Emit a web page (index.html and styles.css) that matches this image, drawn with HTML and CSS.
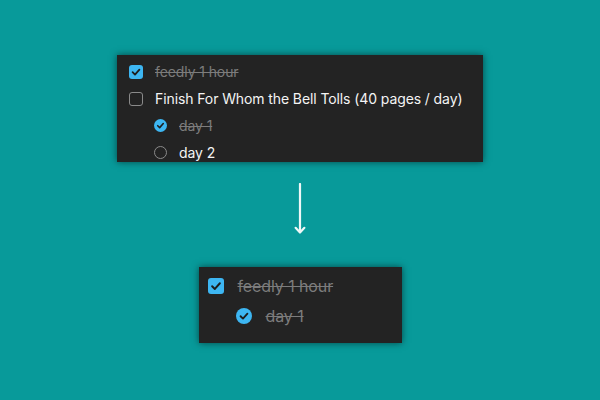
FILE: index.html
```html
<!DOCTYPE html>
<html>
<head>
<meta charset="utf-8">
<link rel="stylesheet" href="styles.css">
</head>
<body>
<div class="stage">
  <div class="panel panel-top">
    <div class="row">
      <span class="box checked"><svg viewBox="0 0 14 14"><path d="M3.6 7.2 L6 9.6 L10.4 4.6" fill="none" stroke="#1d1d1d" stroke-width="1.8" stroke-linecap="round" stroke-linejoin="round"/></svg></span>
      <span class="label done">feedly 1 hour</span>
    </div>
    <div class="row">
      <span class="box"></span>
      <span class="label">Finish For Whom the Bell Tolls (40 pages / day)</span>
    </div>
    <div class="row sub">
      <span class="circle checked"><svg viewBox="0 0 14 14"><path d="M4 7.2 L6.1 9.3 L10 4.9" fill="none" stroke="#1d1d1d" stroke-width="1.7" stroke-linecap="round" stroke-linejoin="round"/></svg></span>
      <span class="label done">day 1</span>
    </div>
    <div class="row sub">
      <span class="circle"></span>
      <span class="label">day 2</span>
    </div>
  </div>

  <svg class="arrow" viewBox="0 0 14 52" width="14" height="52">
    <path d="M7 1 V49" stroke="#eef7f7" stroke-width="2.2" stroke-linecap="round" fill="none"/>
    <path d="M2.6 44.8 L7 49.5 L11.4 44.8" stroke="#eef7f7" stroke-width="2.2" stroke-linecap="round" stroke-linejoin="round" fill="none"/>
  </svg>

  <div class="panel panel-bottom">
    <div class="row">
      <span class="box checked"><svg viewBox="0 0 14 14"><path d="M3.6 7.2 L6 9.6 L10.4 4.6" fill="none" stroke="#1d1d1d" stroke-width="1.7" stroke-linecap="round" stroke-linejoin="round"/></svg></span>
      <span class="label done">feedly 1 hour</span>
    </div>
    <div class="row sub">
      <span class="circle checked"><svg viewBox="0 0 14 14"><path d="M4 7.2 L6.1 9.3 L10 4.9" fill="none" stroke="#1d1d1d" stroke-width="1.6" stroke-linecap="round" stroke-linejoin="round"/></svg></span>
      <span class="label done">day 1</span>
    </div>
  </div>
</div>
</body>
</html>
```

FILE: styles.css
```css
html, body {
  margin: 0;
  padding: 0;
  width: 600px;
  height: 400px;
  background: #089a9a;
  overflow: hidden;
}

.stage {
  display: flex;
  flex-direction: column;
  align-items: center;
  font-family: Inter, "Noto Sans", sans-serif;
}

.panel {
  background: #232323;
  box-shadow: 0 0 7px rgba(0, 0, 0, 0.55);
  box-sizing: border-box;
  overflow: hidden;
  display: flex;
  flex-direction: column;
}

.panel-top {
  margin-top: 55px;
  width: 366px;
  height: 107px;
  padding: 7px 0 0 12px;
  gap: 6.7px;
  font-size: 14px;
}

.panel-top .row {
  height: 20px;
  gap: 12px;
}

.panel-top .sub {
  padding-left: 25px;
}

.panel-top .box {
  width: 14px;
  height: 14px;
}

.panel-top .circle {
  width: 13px;
  height: 13px;
}

.row {
  display: flex;
  align-items: center;
}

.box, .circle {
  flex: none;
  box-sizing: border-box;
  border: 1.7px solid #8a8a8a;
  display: flex;
  align-items: center;
  justify-content: center;
}

.box {
  border-radius: 3px;
}

.circle {
  border-radius: 50%;
}

.box.checked, .circle.checked {
  background: #3db6f2;
  border: none;
}

.box svg, .circle svg {
  width: 100%;
  height: 100%;
  display: block;
}

.label {
  color: #f4f4f4;
  white-space: nowrap;
  letter-spacing: -0.1px;
}

.label.done {
  color: #7c7c7c;
  text-decoration: line-through;
  text-decoration-color: #7c7c7c;
  text-decoration-thickness: 1.3px;
}

.arrow {
  display: block;
  margin-top: 21px;
}

.panel-bottom {
  margin-top: 32px;
  width: 203px;
  height: 76px;
  padding: 9px 0 0 9px;
  gap: 10px;
  font-size: 16px;
}

.panel-bottom .row {
  height: 20px;
  gap: 14px;
}

.panel-bottom .sub {
  padding-left: 28px;
}

.panel-bottom .box {
  width: 16px;
  height: 16px;
}

.panel-bottom .circle {
  width: 16px;
  height: 16px;
}
```
